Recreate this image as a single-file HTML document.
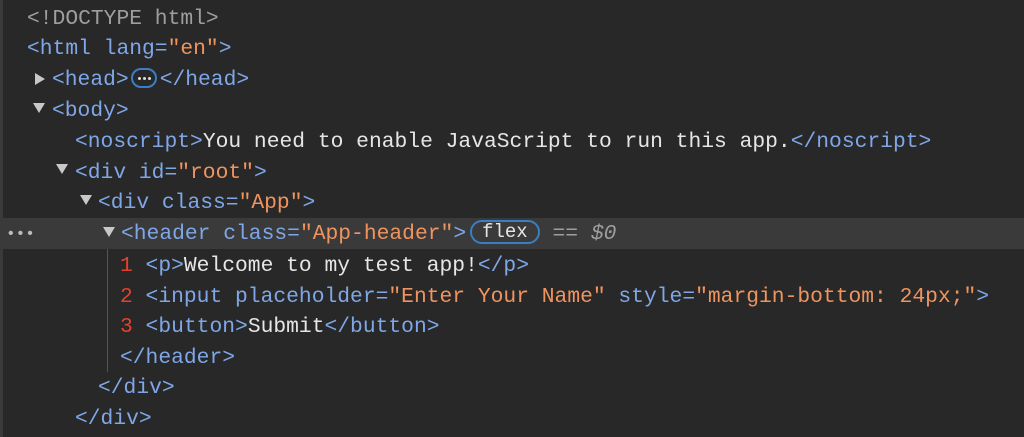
<!DOCTYPE html>
<html><head><style>
body{margin:0;width:1024px;height:437px;background:#282828;overflow:hidden;position:relative;font-family:"Liberation Mono",monospace;font-size:21.3px;}
.l{position:absolute;left:0;height:31px;line-height:31px;white-space:pre;color:#7fa7e8;width:1024px;margin-top:2px}
.t{color:#7fa7e8}.v{color:#f0945f}.w{color:#e6e6e6}.g{color:#9e9e9e}.n{color:#e5412c}
.tri{position:absolute;width:0;height:0}
.r{border-top:6px solid transparent;border-bottom:6px solid transparent;border-left:10px solid #c8c8c8}
.d{border-left:6px solid transparent;border-right:6px solid transparent;border-top:10px solid #c8c8c8}
.hl{position:absolute;left:0;top:218px;width:1024px;height:31px;background:#3a3a3a}
.badge{display:inline-block;border:2px solid #3c7ec4;border-radius:12px;height:24px;line-height:20px;padding:0 10px;box-sizing:border-box;vertical-align:middle;color:#e6e6e6;font-size:19px;margin-top:-3px}
.dots{display:inline-block;position:relative;width:26px;height:20px;border:2px solid #3c7ec4;border-radius:10px;box-sizing:border-box;vertical-align:middle;margin:-3px 3px 0 2px}
.dots i{position:absolute;top:7px;width:3px;height:3px;background:#ddd;border-radius:2px}
</style></head><body>
<div style="position:absolute;left:0;top:0;width:3px;height:437px;background:#3a3a3a"></div>
<div class="hl"></div>
<div class="l g" style="top:2px;left:27px">&lt;!DOCTYPE html&gt;</div>
<div class="l" style="top:32px;left:27px">&lt;html lang=<span class="v">"en"</span>&gt;</div>
<div class="tri r" style="left:35px;top:73px"></div>
<div class="l" style="top:63px;left:52px">&lt;head&gt;<span class="dots"><i style="left:5px"></i><i style="left:10px"></i><i style="left:15px"></i></span>&lt;/head&gt;</div>
<div class="tri d" style="left:33px;top:103px"></div>
<div class="l" style="top:94px;left:52px">&lt;body&gt;</div>
<div class="l" style="top:125px;left:75px">&lt;noscript&gt;<span class="w">You need to enable JavaScript to run this app.</span>&lt;/noscript&gt;</div>
<div class="tri d" style="left:56px;top:164px"></div>
<div class="l" style="top:156px;left:75px">&lt;div id=<span class="v">"root"</span>&gt;</div>
<div class="tri d" style="left:80px;top:195px"></div>
<div class="l" style="top:186px;left:98px">&lt;div class=<span class="v">"App"</span>&gt;</div>
<div class="l g" style="top:217px;left:6px;font-size:16px;color:#bbb">•••</div>
<div class="tri d" style="left:103px;top:227px"></div>
<div class="l" style="top:217px;left:121px">&lt;header class=<span class="v">"App-header"</span>&gt;<span class="badge" style="margin-left:4px">flex</span><span class="g"> == <i>$0</i></span></div>
<div style="position:absolute;left:107px;top:249px;width:1px;height:123px;background:#555"></div>
<div class="l" style="top:249px;left:120px"><span class="n">1</span> &lt;p&gt;<span class="w">Welcome to my test app!</span>&lt;/p&gt;</div>
<div class="l" style="top:280px;left:120px"><span class="n">2</span> &lt;input placeholder=<span class="v">"Enter Your Name"</span> style=<span class="v">"margin-bottom: 24px;"</span>&gt;</div>
<div class="l" style="top:310px;left:120px"><span class="n">3</span> &lt;button&gt;<span class="w">Submit</span>&lt;/button&gt;</div>
<div class="l" style="top:341px;left:120px">&lt;/header&gt;</div>
<div class="l" style="top:371px;left:98px">&lt;/div&gt;</div>
<div class="l" style="top:402px;left:75px">&lt;/div&gt;</div>
</body></html>
